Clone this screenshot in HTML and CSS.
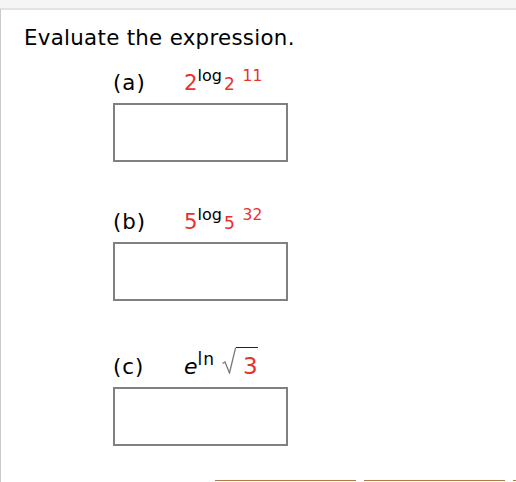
FILE: index.html
```html
<!DOCTYPE html>
<html lang="en">
<head>
<meta charset="utf-8">
<title>Evaluate the expression</title>
<link rel="stylesheet" href="styles.css">
</head>
<body>
<div class="sheet">
  <p class="title">Evaluate the expression.</p>

  <div class="part">
    <div class="row">
      <span class="label">(a)</span>
      <span class="expr"><span class="red">2</span><span class="exp"><span class="fn">log</span><span class="sub red">2</span> <span class="arg red">11</span></span></span>
    </div>
    <input class="answer" type="text" aria-label="answer a">
  </div>

  <div class="part">
    <div class="row">
      <span class="label">(b)</span>
      <span class="expr"><span class="red">5</span><span class="exp"><span class="fn">log</span><span class="sub red">5</span> <span class="arg red">32</span></span></span>
    </div>
    <input class="answer" type="text" aria-label="answer b">
  </div>

  <div class="part part-tall">
    <div class="row">
      <span class="label">(c)</span>
      <span class="expr"><span class="e">e</span><span class="exp"><span class="fn fn-ln">ln</span></span><span class="sqrt"><svg class="radical" width="14" height="27" viewBox="0 0 14 27"><path d="M0.5 16.5 L3 15 L7.5 26 L13.6 0.75" fill="none" stroke="#7a7a7a" stroke-width="1.3"/></svg><span class="radicand red">3</span></span></span>
    </div>
    <input class="answer" type="text" aria-label="answer c">
  </div>

  <div class="actions">
    <div class="btn" role="button" aria-label="Read It"></div>
    <div class="btn" role="button" aria-label="Watch It"></div>
    <div class="btn" role="button" aria-label="Master It"></div>
  </div>
</div>
</body>
</html>
```

FILE: styles.css
```css
html, body {
  margin: 0;
  padding: 0;
  overflow: hidden;
  height: 100%;
}

body {
  background: #f5f5f5;
  font-family: "DejaVu Sans", Verdana, sans-serif;
  color: #000;
  padding-top: 8px;
  box-sizing: border-box;
}

.sheet {
  background: #fff;
  border-top: 2px solid #e2e2e2;
  border-left: 1px solid #cacaca;
  min-height: 100%;
  display: flex;
  flex-direction: column;
  align-items: flex-start;
}

.title {
  margin: 15px 0 0 23px;
  font-size: 21.33px;
  line-height: 26px;
  letter-spacing: 0.3px;
}

.part {
  margin: 19px 0 0 112px;
  display: flex;
  flex-direction: column;
}

.part + .part {
  margin-top: 47px;
}

.part + .part-tall {
  margin-top: 46px;
}

.row {
  display: flex;
  align-items: baseline;
  font-size: 21.33px;
  line-height: 26px;
}

.label {
  width: 71px;
  flex-shrink: 0;
  letter-spacing: 1px;
}

.expr {
  white-space: nowrap;
}

.red {
  color: #e8322a;
}

.exp {
  vertical-align: 9px;
  line-height: 0;
}

.fn {
  font-size: 16px;
  color: #000;
}

.sub {
  font-size: 17px;
  vertical-align: -9px;
  margin-left: 2px;
}

.arg {
  font-size: 15.5px;
  margin-left: 1px;
}

.e {
  font-style: italic;
  font-size: 22px;
}

.fn-ln {
  font-size: 17px;
  letter-spacing: 1px;
}

.sqrt {
  display: inline-flex;
  align-items: baseline;
  margin-left: 7px;
}

.radical {
  display: block;
  flex-shrink: 0;
}

.radicand {
  font-size: 23px;
  line-height: 26px;
  border-top: 1.5px solid #222;
  padding: 5px 0 0 7px;
}

.answer {
  display: block;
  box-sizing: border-box;
  width: 175px;
  height: 59px;
  margin: 7px 0 0;
  padding: 0 6px;
  border: 2px solid #808080;
  border-radius: 0;
  background: #fff;
  font-family: "DejaVu Sans", Verdana, sans-serif;
  font-size: 16px;
  outline: none;
}

.actions {
  display: flex;
  flex-wrap: nowrap;
  gap: 8px;
  margin: 34px 0 0 214px;
}

.btn {
  flex-shrink: 0;
  width: 141px;
  height: 34px;
  border-top: 1px solid #b07a45;
  background: #fff;
}
```
